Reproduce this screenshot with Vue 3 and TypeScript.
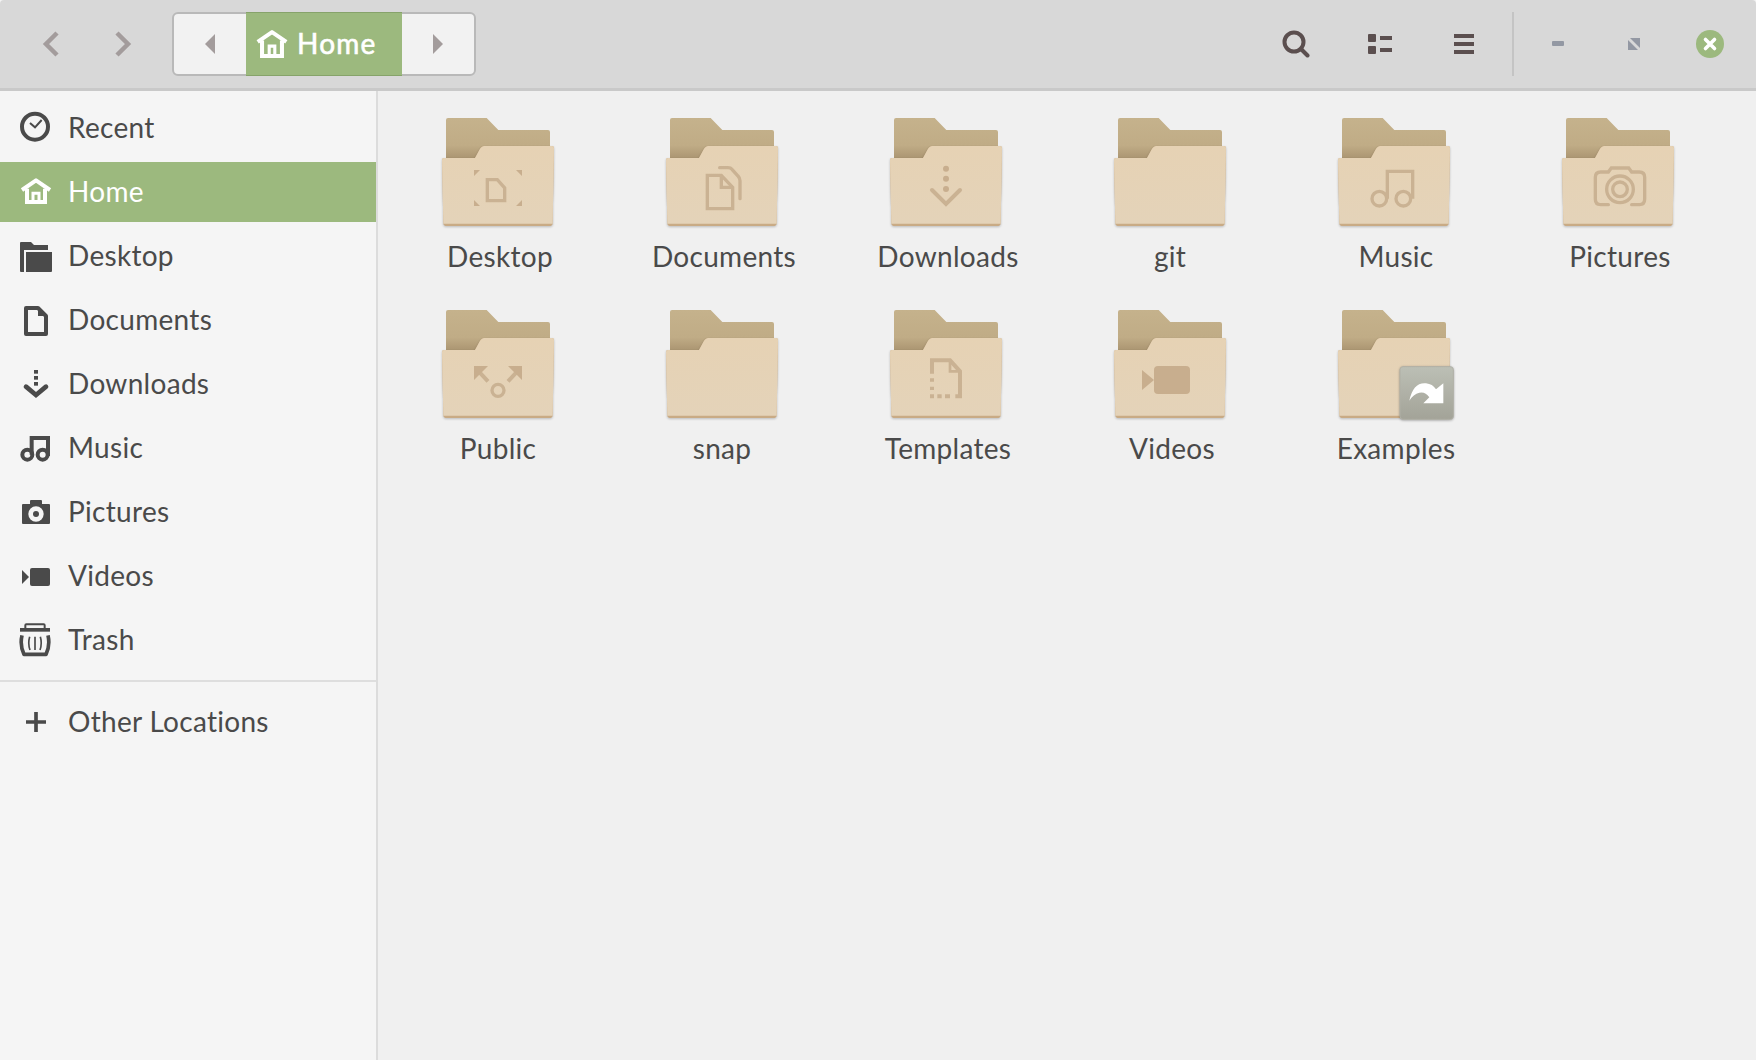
<script setup lang="ts">
const places = [
  { name: 'Recent', icon: 'recent' },
  { name: 'Home', icon: 'home', active: true },
  { name: 'Desktop', icon: 'desktop' },
  { name: 'Documents', icon: 'documents' },
  { name: 'Downloads', icon: 'downloads' },
  { name: 'Music', icon: 'music' },
  { name: 'Pictures', icon: 'pictures' },
  { name: 'Videos', icon: 'videos' },
  { name: 'Trash', icon: 'trash' },
]

const folders = [
  'Desktop',
  'Documents',
  'Downloads',
  'git',
  'Music',
  'Pictures',
  'Public',
  'snap',
  'Templates',
  'Videos',
  'Examples',
]

const centred = ['git', 'snap', 'Public']
</script>

<template>
  <div class="window">
    <svg class="defs" width="0" height="0">
      <defs>
        <linearGradient id="folder-back" x1="0" y1="0" x2="0" y2="1">
          <stop offset="0" stop-color="#c5b28c" />
          <stop offset="0.65" stop-color="#c0ac86" />
          <stop offset="1" stop-color="#a8926f" />
        </linearGradient>
        <linearGradient id="folder-front" x1="0" y1="0" x2="0" y2="1">
          <stop offset="0" stop-color="#e6d2b4" />
          <stop offset="1" stop-color="#e4d3b9" />
        </linearGradient>
        <linearGradient id="link-bg" x1="0" y1="0" x2="0" y2="1">
          <stop offset="0" stop-color="#bcbfb5" />
          <stop offset="1" stop-color="#a3a398" />
        </linearGradient>
      </defs>
    </svg>

    <header class="toolbar">
      <div class="nav-btn">
        <svg width="18" height="26" viewBox="0 0 18 26"><path d="M15 2 L4 13 L15 24" class="chev" /></svg>
      </div>
      <div class="nav-btn">
        <svg width="18" height="26" viewBox="0 0 18 26"><path d="M3 2 L14 13 L3 24" class="chev" /></svg>
      </div>

      <div class="pathbar">
        <div class="path-arrow">
          <svg width="10" height="20" viewBox="0 0 10 20"><path d="M10 0 V20 L0 10 Z" fill="#a39c9c" /></svg>
        </div>
        <div class="path-home">
          <svg width="34" height="28" viewBox="0 0 108 90">
            <g transform="translate(0 -10)" fill="none" stroke="#fff">
              <path d="M8 48 L54 17 L100 48" stroke-width="13" stroke-linejoin="round" />
              <path d="M22 44 V94 H86 V44" stroke-width="13" />
              <path d="M45 94 V62 H63 V94" stroke-width="10" />
            </g>
          </svg>
          <span>Home</span>
        </div>
        <div class="path-arrow">
          <svg width="10" height="20" viewBox="0 0 10 20"><path d="M0 0 V20 L10 10 Z" fill="#a39c9c" /></svg>
        </div>
      </div>

      <div class="spacer"></div>

      <div class="tool-btn">
        <svg width="28" height="28" viewBox="0 0 28 28" fill="none" stroke="#5b4f4f">
          <circle cx="12" cy="12" r="9.5" stroke-width="4" />
          <path d="M19 19 L25.5 25.5" stroke-width="4" stroke-linecap="round" />
        </svg>
      </div>
      <div class="tool-btn">
        <svg width="24" height="20" viewBox="0 0 24 20" fill="#5b4f4f">
          <rect x="0" y="0" width="8" height="8" rx="1" />
          <rect x="0" y="12" width="8" height="8" rx="1" />
          <rect x="12" y="2" width="12" height="4" />
          <rect x="12" y="14" width="12" height="4" />
        </svg>
      </div>
      <div class="tool-btn">
        <svg width="20" height="20" viewBox="0 0 20 20" fill="#5b4f4f">
          <rect x="0" y="0" width="20" height="4" />
          <rect x="0" y="8" width="20" height="4" />
          <rect x="0" y="16" width="20" height="4" />
        </svg>
      </div>

      <div class="toolbar-sep"></div>

      <div class="win-btn">
        <svg width="12" height="5" viewBox="0 0 12 5"><rect width="12" height="5" rx="1" fill="#9398a3" /></svg>
      </div>
      <div class="win-btn">
        <svg width="12" height="12" viewBox="0 0 12 12" fill="#9398a3">
          <path d="M2 0 H12 V10 Z" />
          <path d="M0 2 V12 H10 Z" />
        </svg>
      </div>
      <div class="win-btn">
        <svg width="28" height="28" viewBox="0 0 28 28">
          <circle cx="14" cy="14" r="14" fill="#9cb97e" />
          <path d="M9.5 9.5 L18.5 18.5 M18.5 9.5 L9.5 18.5" stroke="#fff" stroke-width="3.6" stroke-linecap="round" />
        </svg>
      </div>
    </header>

    <div class="body">
      <aside class="sidebar">
        <div
          v-for="place in places"
          :key="place.name"
          class="place"
          :class="{ active: place.active }"
        >
          <svg class="place-icon" width="36" height="36" viewBox="0 0 108 108">
            <g v-if="place.icon === 'recent'" fill="none" stroke="currentColor">
              <circle cx="51" cy="50" r="39" stroke-width="12" />
              <path d="M36 39 L51 52 L71 30" stroke-width="6" />
            </g>
            <g v-else-if="place.icon === 'home'" fill="none" stroke="currentColor">
              <path d="M12 48 L54 19 L96 48" stroke-width="12" stroke-linejoin="round" />
              <path d="M27 44 V84 H81 V44" stroke-width="12" />
              <path d="M45 84 V58 H63 V84" stroke-width="9" />
            </g>
            <g v-else-if="place.icon === 'desktop'" fill="currentColor">
              <path d="M6 15 q0-3 3-3 h30 l9 9 h42 v15 H18 v66 H9 q-3 0-3-3 Z" />
              <path d="M24 42 H102 V99 q0 3-3 3 H24 Z" />
            </g>
            <g v-else-if="place.icon === 'documents'">
              <path d="M24 18 H60 L84 42 V96 H24 Z" fill="none" stroke="currentColor" stroke-width="12" stroke-linejoin="round" />
              <path d="M60 18 L84 42 H60 Z" fill="currentColor" />
            </g>
            <g v-else-if="place.icon === 'downloads'" fill="currentColor">
              <rect x="48" y="12" width="12" height="11" />
              <rect x="48" y="30" width="12" height="11" />
              <rect x="48" y="48" width="12" height="11" />
              <path d="M24 62 L54 87 L84 62" fill="none" stroke="currentColor" stroke-width="14" stroke-linecap="round" />
            </g>
            <g v-else-if="place.icon === 'music'" fill="none" stroke="currentColor" stroke-width="12">
              <circle cx="28" cy="74" r="15" />
              <circle cx="74" cy="74" r="15" />
              <path d="M41 74 V24 H90 V78" />
            </g>
            <g v-else-if="place.icon === 'pictures'">
              <path d="M12 33 q0-3 3-3 H36 V21 q0-3 3-3 H69 q3 0 3 3 V30 H93 q3 0 3 3 V87 q0 3-3 3 H15 q-3 0-3-3 Z" fill="currentColor" />
              <circle cx="54" cy="60" r="23" fill="#f5f5f5" />
              <circle cx="54" cy="60" r="9" fill="currentColor" />
            </g>
            <g v-else-if="place.icon === 'videos'" fill="currentColor">
              <rect x="36" y="30" width="60" height="54" rx="6" />
              <path d="M12 36 L33 57 L12 78 Z" />
            </g>
            <g v-else-if="place.icon === 'trash'">
              <rect x="6" y="18" width="90" height="11" fill="currentColor" />
              <path d="M22 18 V10 q0-3 3-3 H77 q3 0 3 3 V18" fill="none" stroke="currentColor" stroke-width="6" />
              <path d="M12 40 Q5 70 18 97 H84 Q97 70 90 40" fill="none" stroke="currentColor" stroke-width="11" stroke-linejoin="round" />
              <path d="M35 44 Q29 64 36 84 M51 44 V84 M67 44 Q73 64 66 84" fill="none" stroke="currentColor" stroke-width="5" />
            </g>
          </svg>
          <span>{{ place.name }}</span>
        </div>

        <div class="sidebar-sep"></div>

        <div class="place">
          <svg class="place-icon" width="36" height="36" viewBox="0 0 108 108">
            <path d="M24 54 H84 M54 24 V84" fill="none" stroke="currentColor" stroke-width="11" />
          </svg>
          <span>Other Locations</span>
        </div>
      </aside>

      <main class="files">
        <div v-for="folder in folders" :key="folder" class="file">
          <!-- drawn in 3x coordinates of the folder artwork -->
          <svg class="folder" width="120" height="120" viewBox="54 36 360 360">
            <path d="M78 60 q0-6 6-6 H200 L235 90 H384 q6 0 6 6 V180 H78 Z" fill="url(#folder-back)" />
            <g class="folder-front">
              <path d="M66 180 q0-6 6-6 H165 L178 150 q6-12 16-12 H396 q6 0 6 6 L398 370 q0 8-6 8 H76 q-6 0-6-8 Z" fill="#c9ab85" />
              <path d="M66 180 q0-6 6-6 H165 L178 150 q6-12 16-12 H396 q6 0 6 6 L398 371 H70 Z" fill="url(#folder-front)" />
            </g>

            <g v-if="folder === 'Desktop'" class="emblem">
              <path d="M162 210 H180 L162 228 Z M306 210 H288 L306 228 Z M162 318 H180 L162 300 Z M306 318 H288 L306 300 Z" class="fill" />
              <path d="M202 239 H232 L254 264 V302 H202 Z" />
            </g>
            <g v-else-if="folder === 'Documents'" class="emblem">
              <path d="M190 226 H232 L266 262 V326 H190 Z" />
              <path d="M232 226 V262 H266" />
              <path d="M227 203 H252 Q260 203 264 208 L282 228 Q288 234 288 242 V296" stroke-linecap="round" />
            </g>
            <g v-else-if="folder === 'Downloads'" class="emblem">
              <circle cx="234" cy="206" r="9" class="fill" />
              <circle cx="234" cy="236" r="9" class="fill" />
              <circle cx="234" cy="267" r="9" class="fill" />
              <path d="M192 270 L234 312 L276 270" stroke-width="12" stroke-linecap="round" />
            </g>
            <g v-else-if="folder === 'Music'" class="emblem">
              <circle cx="190" cy="296" r="22" />
              <circle cx="262" cy="296" r="22" />
              <path d="M214 296 V214 H290 V296" />
            </g>
            <g v-else-if="folder === 'Pictures'" class="emblem">
              <path d="M205 314 H182 Q166 314 166 298 V232 Q166 216 182 216 H205 L214 204 H266 L275 216 H298 Q314 216 314 232 V298 Q314 314 298 314 H275" stroke-linecap="round" />
              <circle cx="240" cy="268" r="40" />
              <circle cx="240" cy="268" r="22" />
            </g>
            <g v-else-if="folder === 'Public'" class="emblem">
              <circle cx="234" cy="295" r="18" />
              <path d="M204 268 L176 238 M264 268 L292 238" stroke-width="12" />
              <path d="M162 222 H204 L162 264 Z M306 222 H264 L306 264 Z" class="fill" />
            </g>
            <g v-else-if="folder === 'Templates'" class="emblem">
              <path d="M192 245 V205 H246 L276 238 V313 H262" stroke-width="12" />
              <path d="M246 205 V238 H276" stroke-width="8" />
              <path d="M192 259 V269 M192 284 V294 M192 307 V319 M208 313 H221 M231 313 H246" stroke-width="12" />
            </g>
            <g v-else-if="folder === 'Videos'" class="emblem">
              <rect x="186" y="222" width="108" height="84" rx="12" class="fill" />
              <path d="M150 234 L186 264 L150 294 Z" class="fill" />
            </g>
            <g v-else-if="folder === 'Examples'">
              <rect class="link-shadow" x="252" y="224" width="160" height="158" rx="9" fill="url(#link-bg)" />
              <path d="M280 326 Q292 270 330 274 Q350 276 360 292 L382 274 V334 H322 L340 316 Q328 298 310 302 Q292 306 280 326 Z" fill="#fff" />
            </g>
          </svg>
          <div class="file-name" :class="{ nudged: !centred.includes(folder) }">{{ folder }}</div>
        </div>
      </main>
    </div>
  </div>
</template>

<style>
html,
body {
  margin: 0;
  background: #f4f4f4;
}
</style>

<style scoped>
.window {
  width: 1756px;
  height: 1060px;
  display: flex;
  flex-direction: column;
  overflow: hidden;
  font-family: Lato, "Noto Sans", sans-serif;
  font-size: 28px;
  letter-spacing: 0.3px;
  color: #4a4a4a;
}

.defs {
  position: absolute;
}

.toolbar {
  flex: none;
  box-sizing: border-box;
  height: 91px;
  padding: 0 8px 1px 15px;
  display: flex;
  align-items: center;
  background: #d8d8d8;
  border-bottom: 3px solid #c9c9c9;
  border-radius: 4px 4px 0 0;
}

.nav-btn {
  width: 72px;
  display: flex;
  justify-content: center;
}

.chev {
  fill: none;
  stroke: #a39c9c;
  stroke-width: 4.5;
}

.pathbar {
  margin-left: 13px;
  box-sizing: border-box;
  width: 304px;
  height: 64px;
  display: flex;
  background: #f2f2f2;
  border: 2px solid #b9b9b9;
  border-radius: 6px;
}

.path-arrow {
  flex: 1;
  display: flex;
  align-items: center;
  justify-content: center;
}

.path-home {
  box-sizing: border-box;
  width: 156px;
  margin: -2px 0;
  padding-left: 9px;
  display: flex;
  align-items: center;
  gap: 8px;
  color: #fff;
  letter-spacing: 1.2px;
  -webkit-text-stroke: 0.6px #fff;
  background: #9cb97e;
  border-top: 1px solid #86a36a;
  border-bottom: 1px solid #86a36a;
}

.path-home span {
  padding-bottom: 2px;
}

.spacer {
  flex: 1;
}

.tool-btn {
  width: 84px;
  display: flex;
  justify-content: center;
}

.toolbar-sep {
  width: 2px;
  height: 64px;
  margin: 0 6px;
  background: #c4c4c4;
}

.win-btn {
  width: 76px;
  display: flex;
  justify-content: center;
}

.body {
  flex: 1;
  display: flex;
  min-height: 0;
}

.sidebar {
  flex: none;
  box-sizing: content-box;
  width: 376px;
  padding-top: 7px;
  display: flex;
  flex-direction: column;
  gap: 4px;
  background: #f5f5f5;
  border-right: 2px solid #dcdcdc;
}

.place {
  height: 60px;
  padding-left: 18px;
  display: flex;
  align-items: center;
  gap: 14px;
}

.place span {
  padding-bottom: 2px;
}

.place.active {
  background: #9cb97e;
  color: #fff;
}

.place-icon {
  flex: none;
}

.sidebar-sep {
  height: 2px;
  margin: 6px 0;
  background: #dedede;
}

.files {
  flex: 1;
  padding: 21px 0 0 8px;
  display: grid;
  grid-template-columns: repeat(6, 224px);
  grid-auto-rows: 192px;
  align-content: start;
  background: #f0f0f0;
}

.file {
  display: flex;
  flex-direction: column;
  align-items: center;
}

.folder {
  overflow: visible;
}

.folder-front {
  filter: drop-shadow(0 3px 3px rgba(0, 0, 0, 0.22));
}

.emblem {
  fill: none;
  stroke: #cab293;
  stroke-width: 10;
}

.emblem .fill {
  fill: #c8ae8e;
  stroke: none;
}

.link-shadow {
  stroke: #b0b0a6;
  stroke-width: 3;
  filter: drop-shadow(0 2px 3px rgba(0, 0, 0, 0.3));
}

.file-name {
  margin-top: 7px;
  line-height: 34px;
}

.file-name.nudged {
  margin-left: 4px;
}
</style>
